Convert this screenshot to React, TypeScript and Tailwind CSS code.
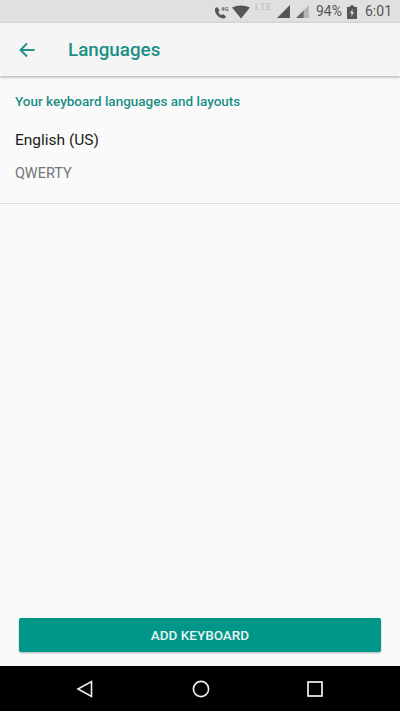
export default function App() {
  return (
    <div className="w-[400px] h-[711px] flex flex-col bg-[#fafafa] overflow-hidden" style={{ fontFamily: 'Roboto, sans-serif' }}>
      <div className="h-[23px] shrink-0 bg-[#e0e0e0] flex items-center justify-end text-[#555] text-[14px]">
        <svg width="16" height="16" viewBox="0 0 16 16">
          <path d="M2 4.5 L4.5 3 L6.5 6.5 L5.3 8 Q6.5 10.5 8.5 11.2 L10 10 L13 12.5 L11.5 14.5 Q7 15 3.5 10.5 Q1.5 7.5 2 4.5Z" fill="#555" />
          <text x="8" y="6.5" fontSize="6" fontWeight="700" fill="#666">4G</text>
        </svg>
        <svg width="20" height="14" viewBox="0 0 20 14" className="ml-[2px]"><path d="M1 2.5 Q10 -1.5 19 2.5 L10 13.5Z" fill="#555" /></svg>
        <span className="text-[9px] font-bold text-[#c4c4c4] ml-[4px] tracking-[0.8px] -mt-[7px]">LTE</span>
        <svg width="15" height="15" viewBox="0 0 14 14" className="ml-[4px]"><path d="M13 1V13H1Z" fill="#555" /></svg>
        <svg width="15" height="15" viewBox="0 0 14 14" className="ml-[4px]"><path d="M13 1V13H1Z" fill="#b5b5b5" /><path d="M8 6V13H1Z" fill="#666" /></svg>
        <span className="ml-[6px] w-[27px]">94%</span>
        <svg width="10" height="14" viewBox="0 0 10 14" className="ml-[4px]"><path d="M0 2H3V0.5H7V2H10V14H0Z" fill="#555" /><path d="M5.8 3.5L3 8.5H4.8L4.2 12L7 7H5.2Z" fill="#e0e0e0" /></svg>
        <span className="ml-[8px] mr-[8px]">6:01</span>
      </div>
      <div className="h-[53px] shrink-0 bg-[#f5f5f5] flex items-center shadow-[0_1px_3px_rgba(0,0,0,0.35)] relative">
        <svg width="18" height="18" viewBox="0 0 18 18" className="ml-[18px]" fill="none" stroke="#1f9187" strokeWidth="1.9"><path d="M16.5 9H2.5M9 2.5L2.5 9L9 15.5" /></svg>
        <span className="ml-[32px] pt-[1px] text-[18.8px] font-medium text-[#1a8f85]">Languages</span>
      </div>
      <div className="h-[50px] shrink-0 flex items-center pl-[15px] text-[13.5px] font-medium text-[#1a8f85]">Your keyboard languages and layouts</div>
      <div className="h-[27px] shrink-0 flex items-center pl-[15px] pt-[2px] text-[15.5px] text-[#212121]">English (US)</div>
      <div className="h-[50px] shrink-0 flex items-start pl-[15px] pt-[10px] text-[14.5px] text-[#757575]">QWERTY</div>
      <div className="h-[1px] shrink-0 bg-[#dcdcdc]" />
      <div className="flex-1 flex items-end px-[19px] pb-[14px]">
        <button className="w-full h-[34px] rounded-[2px] bg-[#009688] text-[#e8f5f3] text-[13.5px] font-medium shadow-[0_1px_2px_rgba(0,0,0,0.3)]">ADD KEYBOARD</button>
      </div>
      <div className="h-[45px] shrink-0 bg-black flex items-center justify-between pl-[76px] pr-[77px]">
        <svg width="18" height="18" viewBox="0 0 18 18" fill="none" stroke="#f2f2f2" strokeWidth="1.6"><path d="M15.5 1.5V16.5L2 9Z" /></svg>
        <svg width="18" height="18" viewBox="0 0 18 18" fill="none" stroke="#f2f2f2" strokeWidth="1.6"><circle cx="9" cy="9" r="7.6" /></svg>
        <svg width="16" height="16" viewBox="0 0 16 16" fill="none" stroke="#f2f2f2" strokeWidth="1.7"><rect x="1" y="1" width="14" height="14" /></svg>
      </div>
    </div>
  );
}
